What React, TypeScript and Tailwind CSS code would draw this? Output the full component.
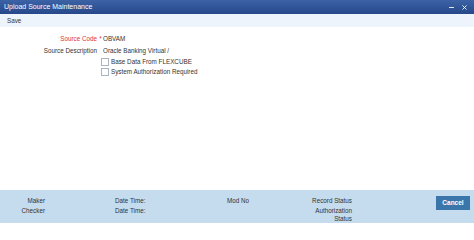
import { X, Minus } from 'lucide-react';

const font = { fontFamily: '"Liberation Sans", Arial, sans-serif' };

function Check({ label }: { label: string }) {
  return (
    <label className="flex h-[10px] items-center gap-[2px]">
      <span className="h-[8px] w-[8px] border border-[#a9b4c2] bg-white" />
      <span>{label}</span>
    </label>
  );
}

export default function App() {
  return (
    <div
      className="flex h-[223px] w-[474px] flex-col overflow-hidden bg-white text-[6.3px] text-[#333]"
      style={font}
    >
      <div className="flex h-[14px] items-center justify-between bg-gradient-to-b from-[#3c63a6] to-[#26488a] px-[4px] text-[7px] text-white">
        <span>Upload Source Maintenance</span>
        <span className="flex items-center gap-[6px] pr-[2px]">
          <Minus size={7} strokeWidth={3} />
          <X size={7} strokeWidth={3} />
        </span>
      </div>
      <div className="flex h-[13px] items-center bg-[#eef4fc] px-[7px]">Save</div>

      <div className="flex flex-1 flex-col pt-[6px]">
        <div className="flex h-[12px] items-center">
          <span className="w-[98px] pr-[1px] text-right text-[#e0303a]">Source Code</span>
          <span className="w-[5px] text-center text-[#e0303a]">*</span>
          <span>OBVAM</span>
        </div>
        <div className="flex h-[12px] items-center">
          <span className="w-[98px] pr-[1px] text-right">Source Description</span>
          <span className="w-[5px]" />
          <span>Oracle Banking Virtual /</span>
        </div>
        <div className="flex flex-col pl-[101px]">
          <Check label="Base Data From FLEXCUBE" />
          <Check label="System Authorization Required" />
        </div>
      </div>

      <div className="flex h-[33px] items-start bg-[#c5dcef] pt-[6px]">
        <div className="flex w-[45px] flex-col items-end leading-[10px]">
          <span>Maker</span>
          <span>Checker</span>
        </div>
        <div className="ml-[70px] flex w-[112px] flex-col leading-[10px]">
          <span>Date Time:</span>
          <span>Date Time:</span>
        </div>
        <div className="flex w-[60px] flex-col leading-[10px]">
          <span>Mod No</span>
        </div>
        <div className="flex w-[65px] flex-col items-end text-right leading-[10px]">
          <span>Record Status</span>
          <span className="pt-[1px] leading-[8px]">
            Authorization
            <br />
            Status
          </span>
        </div>
        <div className="ml-auto pr-[4px] pt-[0px]">
          <button className="h-[14px] w-[34px] bg-[#3b76aa] text-[6.5px] font-bold text-white">
            Cancel
          </button>
        </div>
      </div>
    </div>
  );
}
